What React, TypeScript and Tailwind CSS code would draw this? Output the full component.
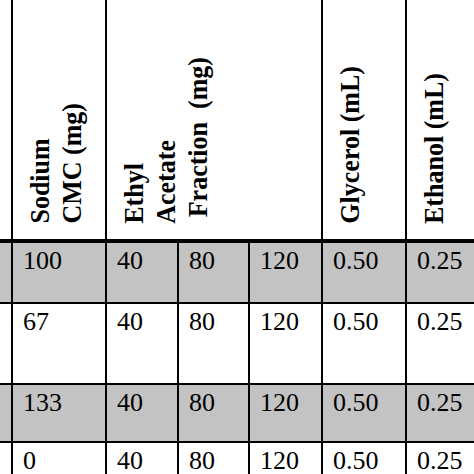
const cols = 'grid grid-cols-[11px_92px_70px_69px_71px_82px_67px] gap-x-[2px]';

const rows = [
  { shade: true, h: 'h-[59px]', v: ['100', '40', '80', '120', '0.50', '0.25'] },
  { shade: false, h: 'h-[79px]', v: ['67', '40', '80', '120', '0.50', '0.25'] },
  { shade: true, h: 'h-[56px]', v: ['133', '40', '80', '120', '0.50', '0.25'] },
  { shade: false, h: 'h-[40px]', v: ['0', '40', '80', '120', '0.50', '0.25'] },
];

// vertical header label, read bottom to top
const HeadCell: React.FC<{ lines: string[]; className?: string }> = ({ lines, className = '' }) => (
  <div className={`bg-white flex items-end pl-[11px] pb-[15px] ${className}`}>
    <div className="[writing-mode:vertical-rl] rotate-180 font-bold text-[26px] leading-[32px] whitespace-pre">
      {lines.map((l) => (
        <div key={l} className="scale-x-[1.08]">
          {l}
        </div>
      ))}
    </div>
  </div>
);

const App: React.FC = () => {
  return (
    <div className="w-[474px] h-[474px] overflow-hidden bg-black text-black font-['Liberation_Serif',serif]">
      {/* Header */}
      <div className={`${cols} h-[239px]`}>
        <div className="bg-white" />
        <HeadCell lines={['Sodium', 'CMC (mg)']} />
        <HeadCell className="col-span-3" lines={['Ethyl', 'Acetate', ' Fraction  (mg)']} />
        <HeadCell lines={['Glycerol (mL)']} />
        <HeadCell lines={['Ethanol (mL)']} />
      </div>

      {/* Body */}
      <div className="mt-[4px] flex flex-col gap-y-[2px]">
        {rows.map((r, i) => (
          <div key={i} className={`${cols} ${r.h}`}>
            <div className={r.shade ? 'bg-[#c3c3c3]' : 'bg-white'} />
            {r.v.map((val, j) => (
              <div
                key={j}
                className={`${r.shade ? 'bg-[#c3c3c3]' : 'bg-white'} pl-[10px] pt-[3px] text-[26px] leading-[30px]`}
              >
                {val}
              </div>
            ))}
          </div>
        ))}
      </div>
    </div>
  );
};

export default App;
